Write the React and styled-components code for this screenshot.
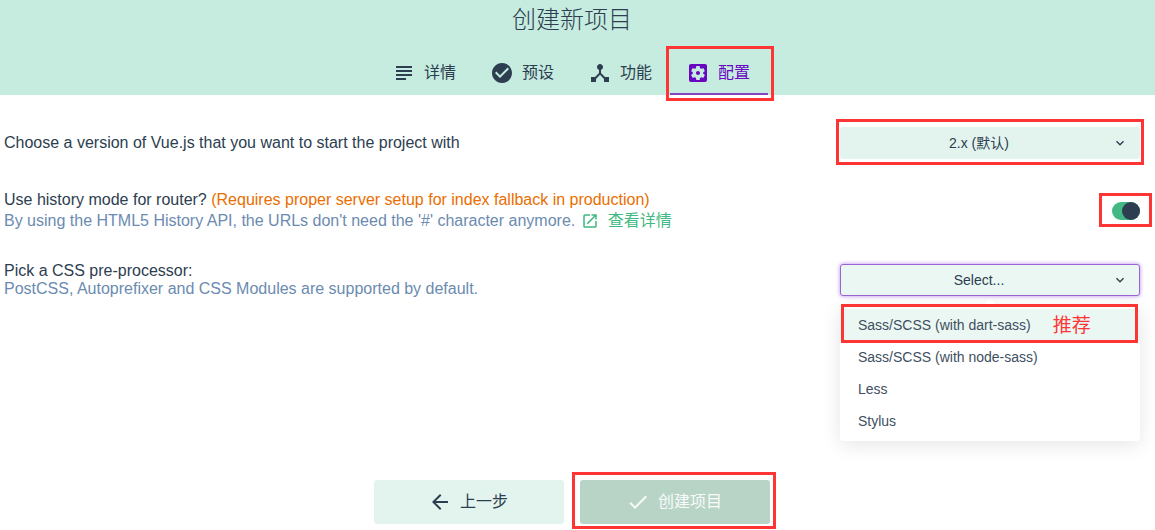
import React, { useState } from 'react';
import styled, { createGlobalStyle, css } from 'styled-components';
import {
    MdArrowBack,
    MdCheck,
    MdCheckCircle,
    MdDeviceHub,
    MdKeyboardArrowDown,
    MdOpenInNew,
    MdSettingsApplications,
    MdSubject
} from 'react-icons/md';

const GlobalStyle = createGlobalStyle`
    :root {
        --dark: #2c3e50;
        --green: #42b983;
        --purple: #6806c1;
        --md: #6b8bb0;
        --pale: #e3f4ee;
        --mark: #fd3535;
    }

    * {
        box-sizing: border-box;
    }

    body {
        margin: 0;
        background: white;
        color: var(--dark);
        font: 16px/18px "Liberation Sans", "Noto Sans CJK SC", sans-serif;
    }

    button, select {
        font-family: inherit;
        color: inherit;
    }
`;

const Page = styled.div`
    display: flex;
    flex-direction: column;
    min-height: 100vh;
`;

const Header = styled.header`
    display: flex;
    flex-direction: column;
    align-items: center;
    padding: 2px 15px 0 4px;
    background: #c6ebdf;
`;

const Title = styled.h1`
    margin: 0 0 13px;
    font-size: 24px;
    line-height: 36px;
    font-weight: 300;
`;

const Tabs = styled.nav`
    display: flex;
`;

const Tab = styled.button`
    position: relative;
    display: flex;
    align-items: center;
    gap: 8px;
    height: 44px;
    padding: 0 18px 0 16px;
    border: none;
    background: none;
    font-size: 16px;
    line-height: 18px;

    > svg {
        width: 24px;
        height: 24px;
    }

    ${({ $active }) => $active && css`
        color: var(--purple);
        box-shadow: inset 0 -2px #8344c8;
    `}
`;

// red frame drawn over its parent, $inset is how far it reaches outside
const Mark = styled.span`
    position: absolute;
    inset: ${({ $inset }) => $inset};
    z-index: 3;
    border: 3px solid var(--mark);
    pointer-events: none;
`;

const Content = styled.main`
    flex: 1;
    display: flex;
    flex-direction: column;
    gap: 30px;
    padding: 32px 15px 0 4px;
`;

const Prompt = styled.div`
    display: flex;
    align-items: center;
    justify-content: space-between;
`;

const PromptText = styled.div`
    line-height: 18px;

    ${({ $tall }) => $tall && css`
        padding-bottom: 1px;
        line-height: 21px;
    `}
`;

const Message = styled.label`
    display: block;
`;

const Warning = styled.span`
    color: #ea6e00;
`;

const Description = styled.div`
    color: var(--md);
`;

const MoreLink = styled.a`
    display: inline-flex;
    align-items: center;
    gap: 9px;
    margin-left: 1px;
    color: var(--green);
    text-decoration: none;
    vertical-align: top;

    > svg {
        width: 18px;
        height: 18px;
    }
`;

const SelectWrapper = styled.div`
    position: relative;
    width: 300px;

    > svg {
        position: absolute;
        top: 8px;
        right: 12px;
        width: 16px;
        height: 16px;
        pointer-events: none;
    }
`;

const StyledSelect = styled.select`
    display: block;
    appearance: none;
    width: 100%;
    height: 32px;
    padding: 0 34px 0 12px;
    border: 1px solid transparent;
    border-radius: 3px;
    background: var(--pale);
    font-size: 14px;
    text-align-last: center;
    outline: none;

    ${({ $open }) => $open && css`
        border-color: #9b63d3;
        background: #ebf7f3;
        box-shadow: 0 0 4px #b78be6;
    `}
`;

const Menu = styled.ul`
    position: absolute;
    top: 41px;
    left: 0;
    right: 0;
    margin: 0;
    padding: 4px 0;
    list-style: none;
    border-radius: 3px;
    background: white;
    box-shadow: 0 4px 20px rgba(0, 0, 0, 0.1);

    &::before {
        content: '';
        position: absolute;
        bottom: 100%;
        left: 50%;
        margin-left: -6px;
        border: 6px solid transparent;
        border-top: none;
        border-bottom-color: white;
    }
`;

const MenuItem = styled.li`
    position: relative;
    display: flex;
    align-items: center;
    gap: 22px;
    height: 32px;
    padding: 0 18px;
    font-size: 14px;
    background: ${({ $hover }) => ($hover ? '#ebf7f3' : 'none')};
    color: #404f5f;
`;

const Note = styled.span`
    padding-top: 2px;
    font-size: 19px;
    color: var(--mark);
`;

const SwitchWrapper = styled.div`
    position: relative;
    display: flex;
`;

const Switch = styled.input`
    appearance: none;
    display: flex;
    width: 28px;
    height: 18px;
    margin: 0;
    border-radius: 9px;
    background: #ccc;

    &::before {
        content: '';
        width: 18px;
        height: 18px;
        border-radius: 50%;
        background: var(--dark);
    }

    &:checked {
        justify-content: flex-end;
        background: var(--green);
    }
`;

const Actions = styled.footer`
    display: flex;
    justify-content: center;
    gap: 16px;
    padding: 0 15px 6px 4px;
`;

const Button = styled.button`
    position: relative;
    display: flex;
    align-items: center;
    justify-content: center;
    gap: 8px;
    min-width: 190px;
    height: 44px;
    padding: 0 8px 0 6px;
    border: none;
    border-radius: 3px;
    background: ${({ $primary }) => ($primary ? '#b7d4c7' : 'var(--pale)')};
    color: ${({ $primary }) => ($primary ? '#f8fbfa' : 'var(--dark)')};
    font-size: 16px;
    line-height: 18px;

    > svg {
        width: 24px;
        height: 24px;
    }
`;

const tabs = [
    { label: '详情', Icon: MdSubject },
    { label: '预设', Icon: MdCheckCircle },
    { label: '功能', Icon: MdDeviceHub },
    { label: '配置', Icon: MdSettingsApplications, marked: true }
];

const processors = [
    { label: 'Sass/SCSS (with dart-sass)', note: '推荐' },
    { label: 'Sass/SCSS (with node-sass)' },
    { label: 'Less' },
    { label: 'Stylus' }
];

const App = () => {
    const [tab, setTab] = useState('配置');
    const [history, setHistory] = useState(true);
    const [processor, setProcessor] = useState('');
    const [hovered, setHovered] = useState(processors[0].label);

    return (
        <Page>
            <GlobalStyle />
            <Header>
                <Title>创建新项目</Title>
                <Tabs>
                    {tabs.map(({ label, Icon, marked }) => (
                        <Tab key={label} $active={tab === label} onClick={() => setTab(label)}>
                            <Icon />
                            {label}
                            {marked && <Mark $inset="-5px -6px -6px -4px" />}
                        </Tab>
                    ))}
                </Tabs>
            </Header>

            <Content>
                <Prompt>
                    <PromptText>
                        <Message htmlFor="version">
                            Choose a version of Vue.js that you want to start the project with
                        </Message>
                    </PromptText>
                    <SelectWrapper>
                        <StyledSelect id="version" defaultValue="2">
                            <option value="2">2.x (默认)</option>
                            <option value="3">3.x</option>
                        </StyledSelect>
                        <MdKeyboardArrowDown />
                        <Mark $inset="-8px -4px -6px -4px" />
                    </SelectWrapper>
                </Prompt>

                <Prompt>
                    <PromptText $tall>
                        <Message htmlFor="history">
                            Use history mode for router?{' '}
                            <Warning>
                                (Requires proper server setup for index fallback in production)
                            </Warning>
                        </Message>
                        <Description>
                            By using the HTML5 History API, the URLs don't need the '#' character anymore.{' '}
                            <MoreLink href="#history">
                                <MdOpenInNew />
                                查看详情
                            </MoreLink>
                        </Description>
                    </PromptText>
                    <SwitchWrapper>
                        <Switch
                            id="history"
                            type="checkbox"
                            checked={history}
                            onChange={e => setHistory(e.target.checked)}
                        />
                        <Mark $inset="-9px -12px -7px -13px" />
                    </SwitchWrapper>
                </Prompt>

                <Prompt>
                    <PromptText>
                        <Message htmlFor="processor">Pick a CSS pre-processor:</Message>
                        <Description>
                            PostCSS, Autoprefixer and CSS Modules are supported by default.
                        </Description>
                    </PromptText>
                    <SelectWrapper>
                        <StyledSelect
                            id="processor"
                            $open
                            value={processor}
                            onChange={e => setProcessor(e.target.value)}
                        >
                            <option value="" hidden>Select...</option>
                            {processors.map(({ label }) => (
                                <option key={label} value={label}>{label}</option>
                            ))}
                        </StyledSelect>
                        <MdKeyboardArrowDown />
                        <Menu role="listbox" aria-label="CSS pre-processor">
                            {processors.map(({ label, note }) => (
                                <MenuItem
                                    key={label}
                                    role="option"
                                    aria-selected={processor === label}
                                    $hover={hovered === label}
                                    onMouseEnter={() => setHovered(label)}
                                    onClick={() => setProcessor(label)}
                                >
                                    {label}
                                    {note && <Note>{note}</Note>}
                                    {note && <Mark $inset="-5px 2px -2px 1px" />}
                                </MenuItem>
                            ))}
                        </Menu>
                    </SelectWrapper>
                </Prompt>
            </Content>

            <Actions>
                <Button>
                    <MdArrowBack />
                    上一步
                </Button>
                <Button $primary disabled={!processor}>
                    <MdCheck />
                    创建项目
                    <Mark $inset="-8px -6px -5px -8px" />
                </Button>
            </Actions>
        </Page>
    );
};

export default App;
